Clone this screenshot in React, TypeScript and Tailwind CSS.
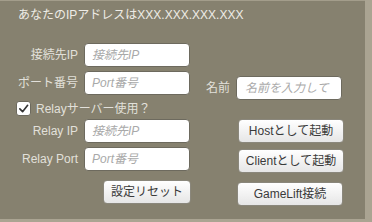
import React from 'react';

const FONT = '"Liberation Sans", "Noto Sans CJK JP", sans-serif';

const Field: React.FC<{ label: string; placeholder: string }> = ({ label, placeholder }) => (
  <div className="flex items-center h-[24px]">
    <span className="w-[79px] text-right text-[12px] text-[#e2e0da] pr-[1px]">{label}</span>
    <input
      className="ml-[5px] w-[106px] h-[24px] rounded-[4px] bg-white border border-[#6d6a5e] pl-[7px] text-[12px] text-[#333] italic placeholder:text-[#a9a9a9] outline-none"
      placeholder={placeholder}
    />
  </div>
);

const Btn: React.FC<{ children: React.ReactNode; wide?: boolean; className?: string }> = ({ children, wide = true, className }) => (
  <button
    className={`h-[24px] ${wide ? 'w-[106px]' : 'w-[88px]'} rounded-[4px] border border-[#8a877c] bg-gradient-to-b from-[#ffffff] to-[#e6e6e6] text-[12px] text-[#3a3a3a] ${className ?? ''}`}
  >
    {children}
  </button>
);

export default function App() {
  return (
    <div className="w-[372px] h-[222px] bg-[#aaa492]" style={{ fontFamily: FONT }}>
      <div className="w-[365px] h-[219px] bg-[#86816f] border-t border-[#a39d8b]">
        {/* header */}
        <div className="pl-[18px] pt-[7px] h-[42px] text-[12px] leading-[15px] text-[#eeece6]">
          あなたのIPアドレスはXXX.XXX.XXX.XXX
        </div>

        <div className="flex">
          {/* left column */}
          <div className="flex flex-col w-[192px]">
            <Field label="接続先IP" placeholder="接続先IP" />
            <div className="h-[4px]" />
            <Field label="ポート番号" placeholder="Port番号" />
            <div className="flex items-center h-[15px] mt-[6px] pl-[16px]">
              <span className="w-[15px] h-[15px] rounded-[3px] bg-white border border-[#6d6a5e] flex items-center justify-center">
                <svg width="11" height="11" viewBox="0 0 12 12" fill="none" stroke="#333" strokeWidth="1.8" strokeLinecap="round" strokeLinejoin="round">
                  <polyline points="2 6.5 5 9.5 10.5 2.5" />
                </svg>
              </span>
              <span className="ml-[5px] text-[12px] text-[#e2e0da]">Relayサーバー使用？</span>
            </div>
            <div className="h-[3px]" />
            <Field label="Relay IP" placeholder="接続先IP" />
            <div className="h-[4px]" />
            <Field label="Relay Port" placeholder="Port番号" />
            <div className="flex justify-end mt-[9px] pr-[1px]">
              <Btn wide={false}>設定リセット</Btn>
            </div>
          </div>

          {/* right column */}
          <div className="flex flex-col">
            <div className="flex items-center h-[24px] mt-[33px]">
              <span className="ml-[14px] text-[12px] text-[#e2e0da]">名前</span>
              <input
                className="ml-[6px] w-[106px] h-[24px] rounded-[4px] bg-white border border-[#6d6a5e] pl-[8px] text-[12px] italic placeholder:text-[#a9a9a9] outline-none"
                placeholder="名前を入力して"
              />
            </div>
            <div className="flex flex-col pl-[46px] mt-[19px]">
              <Btn>Hostとして起動</Btn>
              <Btn className="mt-[6px]">Clientとして起動</Btn>
              <Btn className="mt-[9px] -ml-[1px]">GameLift接続</Btn>
            </div>
          </div>
        </div>
      </div>
    </div>
  );
}
